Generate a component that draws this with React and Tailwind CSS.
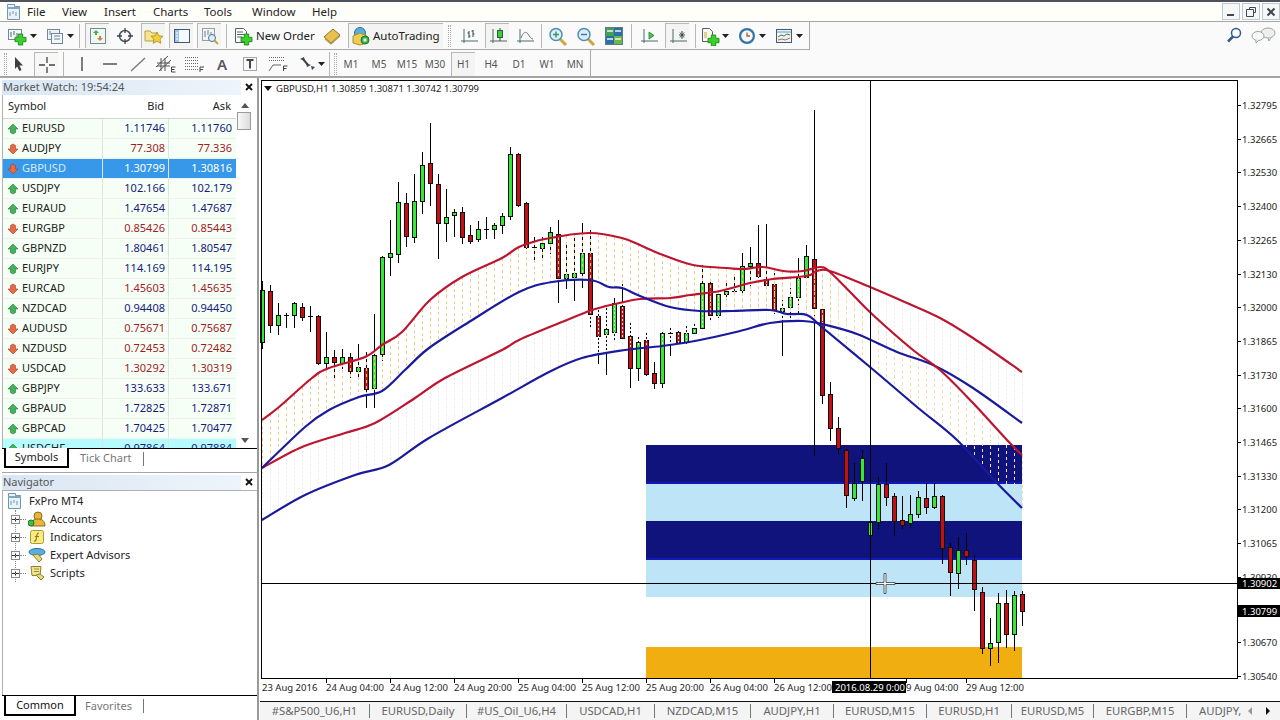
import React from "react";

const FONT = "font-['Noto_Sans','DejaVu_Sans',sans-serif]";

const markets = [
  ["EURUSD", "1.11746", "1.11760", 1],
  ["AUDJPY", "77.308", "77.336", 0],
  ["GBPUSD", "1.30799", "1.30816", 0],
  ["USDJPY", "102.166", "102.179", 1],
  ["EURAUD", "1.47654", "1.47687", 1],
  ["EURGBP", "0.85426", "0.85443", 0],
  ["GBPNZD", "1.80461", "1.80547", 1],
  ["EURJPY", "114.169", "114.195", 1],
  ["EURCAD", "1.45603", "1.45635", 0],
  ["NZDCAD", "0.94408", "0.94450", 1],
  ["AUDUSD", "0.75671", "0.75687", 0],
  ["NZDUSD", "0.72453", "0.72482", 0],
  ["USDCAD", "1.30292", "1.30319", 0],
  ["GBPJPY", "133.633", "133.671", 1],
  ["GBPAUD", "1.72825", "1.72871", 1],
  ["GBPCAD", "1.70425", "1.70477", 1],
  ["USDCHF", "0.97864", "0.97884", 1],
];

// x, high, bodyTop, bodyBottom, low, colour
const candles = [
  [262,281,290,342,348,"g"],[270,285,291,325,332,"r"],[278,303,315,325,334,"g"],[286,313,315,315,327,"d"],
  [294,302,303,315,327,"g"],[302,303,307,317,320,"r"],[310,306,316,316,331,"d"],[318,315,316,363,364,"r"],
  [326,332,357,363,368,"g"],[334,350,357,362,377,"r"],[342,349,357,363,368,"g"],[350,353,357,371,377,"r"],
  [358,344,367,371,377,"g"],[366,352,368,389,407,"r"],[374,314,355,388,407,"g"],[382,256,257,354,360,"g"],
  [390,220,253,257,275,"g"],[398,182,202,254,262,"g"],[406,193,203,236,246,"r"],[414,174,201,237,242,"g"],
  [422,152,165,201,213,"g"],[430,123,163,183,205,"r"],[438,174,184,223,258,"r"],[446,189,217,223,241,"g"],
  [454,209,212,215,236,"g"],[462,207,212,237,243,"r"],[470,225,235,241,243,"r"],[478,221,229,239,241,"g"],
  [486,217,229,229,238,"d"],[494,223,225,229,238,"g"],[502,213,216,225,233,"g"],[510,147,154,216,219,"g"],
  [518,153,154,205,206,"r"],[526,202,203,247,248,"r"],[534,237,247,247,260,"d"],[542,237,243,248,260,"g"],
  [550,227,232,243,253,"g"],[558,220,234,278,302,"r"],[566,243,274,278,288,"g"],[574,238,273,277,300,"g"],
  [582,223,253,273,287,"g"],[590,230,253,314,327,"r"],[598,310,316,336,363,"r"],[606,308,329,334,374,"g"],
  [614,298,303,332,340,"g"],[622,284,306,338,339,"r"],[630,322,336,368,387,"r"],[638,335,342,368,380,"g"],
  [646,333,340,374,375,"r"],[654,362,373,383,388,"r"],[662,332,333,383,387,"g"],[670,326,333,333,355,"d"],
  [678,330,332,342,343,"r"],[686,325,333,342,343,"g"],[694,322,328,333,335,"g"],[702,265,283,328,329,"g"],
  [710,280,283,315,320,"r"],[718,293,294,315,317,"g"],[726,282,291,294,300,"g"],[734,277,291,291,292,"d"],
  [742,253,266,290,295,"g"],[750,247,263,266,287,"g"],[758,225,263,276,277,"r"],[766,224,279,285,286,"r"],
  [774,273,284,310,313,"r"],[782,298,308,311,355,"g"],[790,287,297,307,320,"g"],[798,258,278,297,312,"g"],
  [806,245,256,277,278,"g"],[814,110,259,308,455,"r"],[822,308,309,395,403,"r"],[830,382,394,428,440,"r"],
  [838,417,428,448,453,"r"],[846,449,450,495,507,"r"],[854,463,483,498,500,"g"],[862,450,458,481,500,"g"],
  [870,505,522,535,536,"g"],[878,477,484,522,528,"g"],[886,463,484,497,505,"r"],[894,493,496,521,535,"r"],
  [902,496,520,525,528,"r"],[910,495,514,523,527,"g"],[918,491,497,514,517,"g"],[926,483,498,507,513,"r"],
  [934,483,496,507,508,"g"],[942,495,496,548,563,"r"],[950,543,547,572,595,"r"],[958,537,550,573,588,"g"],
  [966,533,550,556,564,"r"],[974,555,560,589,610,"r"],[982,587,592,648,653,"r"],[990,618,643,648,665,"g"],
  [998,593,603,642,662,"g"],[1006,590,603,634,647,"r"],[1014,591,595,634,650,"g"],[1022,591,594,611,625,"r"],
];

const R1 = [[262,420],[279,407],[312,378],[329,368],[365,357],[382,345],[402,332],[430,300],[462,277],[502,258],[519,247],[545,239],[589,233],[622,238],[642,246],[663,255],[693,265],[727,268],[743,269],[763,267],[783,271],[803,271],[820,267],[830,272],[853,295],[873,315],[913,350],[940,370],[973,403],[1007,440],[1022,455]];
const R2 = [[262,468],[302,447],[345,433],[375,423],[415,398],[445,378],[502,350],[519,340],[562,322],[592,310],[615,304],[640,299],[670,298],[690,295],[720,291],[750,283],[773,279],[807,276],[817,271],[830,271],[870,287],[907,303],[940,318],[973,338],[1022,372]];
const B1 = [[262,468],[305,427],[329,410],[359,397],[382,391],[405,370],[429,348],[469,322],[519,292],[552,282],[590,280],[609,287],[622,288],[640,296],[670,307],[700,311],[733,311],[770,310],[787,314],[807,315],[823,328],[870,367],[917,407],[957,440],[997,483],[1022,508]];
const B2 = [[262,520],[305,495],[355,475],[389,465],[429,438],[502,398],[549,372],[582,358],[625,350],[662,346],[700,340],[740,331],[770,323],[803,321],[822,324],[857,334],[897,352],[933,365],[973,388],[1022,423]];

const smooth = (l) => {
  let d = `M${l[0][0]} ${l[0][1]}`;
  for (let i = 0; i < l.length - 1; i++) {
    const p0 = l[Math.max(i - 1, 0)], p1 = l[i], p2 = l[i + 1], p3 = l[Math.min(i + 2, l.length - 1)];
    const c1 = [p1[0] + (p2[0] - p0[0]) / 6, p1[1] + (p2[1] - p0[1]) / 6];
    const c2 = [p2[0] - (p3[0] - p1[0]) / 6, p2[1] - (p3[1] - p1[1]) / 6];
    d += `C${c1[0].toFixed(1)} ${c1[1].toFixed(1)} ${c2[0].toFixed(1)} ${c2[1].toFixed(1)} ${p2[0]} ${p2[1]}`;
  }
  return d;
};
const at = (l, x) => {
  for (let i = 0; i < l.length - 1; i++) {
    if (x >= l[i][0] && x <= l[i + 1][0]) {
      return l[i][1] + ((l[i + 1][1] - l[i][1]) * (x - l[i][0])) / (l[i + 1][0] - l[i][0]);
    }
  }
  return l[l.length - 1][1];
};

const hatchXs = [];
for (let x = 262; x <= 1022; x += 8) hatchXs.push(x);

const prices = [
  ["1.32795",105],["1.32665",139],["1.32530",172],["1.32400",206],["1.32265",240],["1.32130",274],["1.32000",307],
  ["1.31865",341],["1.31730",375],["1.31600",408],["1.31465",442],["1.31330",476],["1.31200",509],["1.31065",543],
  ["1.30930",577],["1.30670",642],["1.30540",676],
];
const times = [
  ["23 Aug 2016",262,false],["24 Aug 04:00",326,true],["24 Aug 12:00",390,true],["24 Aug 20:00",454,true],
  ["25 Aug 04:00",518,true],["25 Aug 12:00",582,true],["25 Aug 20:00",646,true],["26 Aug 04:00",710,true],
  ["26 Aug 12:00",774,true],["9 Aug 04:00",906,true],["29 Aug 12:00",966,true],
];

function Chart() {
  return (
    <svg viewBox="260 78 1020 623" className="block h-[623px] w-[1020px]" style={{ fontFamily: "'Noto Sans','DejaVu Sans',sans-serif" }}>
      <rect x="260" y="78" width="1020" height="623" fill="#ffffff" />
      <g shapeRendering="crispEdges">
        <rect x="646" y="445" width="376" height="39" fill="#10137c" />
        <rect x="646" y="482" width="376" height="2" fill="#1418b8" />
        <rect x="646" y="484" width="376" height="37" fill="#bde4f7" />
        <rect x="646" y="521" width="376" height="39" fill="#10137c" />
        <rect x="646" y="558" width="376" height="2" fill="#1418b8" />
        <rect x="646" y="560" width="376" height="37" fill="#bde4f7" />
        <rect x="646" y="647" width="376" height="31" fill="#f0ae10" />
      </g>
      <g shapeRendering="crispEdges">
        {candles.map(([x, h, t, b, l, c]) => (
          <g key={x}>
            <line x1={x + 0.5} x2={x + 0.5} y1={h} y2={l + 1} stroke="#000" />
            {c === "d" ? (
              <line x1={x - 2} x2={x + 3} y1={t + 0.5} y2={t + 0.5} stroke="#000" />
            ) : (
              <rect x={x - 1.5} y={t + 0.5} width="4" height={b - t} fill={c === "g" ? "#35e835" : "#c40f14"} stroke="#111" />
            )}
          </g>
        ))}
      </g>
      <g shapeRendering="crispEdges">
        {hatchXs.map((x) => {
          const a = at(R2, x), b = at(B2, x), c = at(R1, x), d = at(B1, x);
          return (
            <g key={x}>
              <line x1={x + 0.5} x2={x + 0.5} y1={Math.min(a, b)} y2={Math.max(a, b)} stroke="#efe9ea" strokeDasharray="2 2" />
              <line x1={x + 0.5} x2={x + 0.5} y1={Math.min(c, d)} y2={Math.max(c, d)} stroke={x > 830 ? "#f5deb0" : "#f3cc88"} strokeDasharray="3 3" />
            </g>
          );
        })}
      </g>
      <path d={smooth(B2)} fill="none" stroke="#1a1a9e" strokeWidth="2.2" />
      <path d={smooth(R2)} fill="none" stroke="#bd1530" strokeWidth="2.2" />
      <path d={smooth(B1)} fill="none" stroke="#1a1a9e" strokeWidth="2.2" />
      <path d={smooth(R1)} fill="none" stroke="#bd1530" strokeWidth="2.2" />

      <g shapeRendering="crispEdges">
        <rect x="261.5" y="80.5" width="976" height="598" fill="none" stroke="#000" />
        <line x1="870.5" x2="870.5" y1="81" y2="678" stroke="#000" />
        <line x1="262" x2="1237" y1="583.5" y2="583.5" stroke="#000" />
        {prices.map(([p, y]) => <line key={p} x1="1237" x2="1241" y1={y + 0.5} y2={y + 0.5} stroke="#000" />)}
        {times.filter((t) => t[2]).map(([t, x]) => <line key={t} x1={x + 0.5} x2={x + 0.5} y1="678" y2="683" stroke="#000" />)}
      </g>

      <path d="M264 86h8l-4 5z" fill="#111" />
      <text x="276" y="92" fontSize="9.5" fill="#222">GBPUSD,H1  1.30859 1.30871 1.30742 1.30799</text>
      {prices.map(([p, y]) => (
        <text key={p} x="1242" y={y + 3.5} fontSize="9.5" fill="#222">{p}</text>
      ))}
      {times.map(([t, x]) => (
        <text key={t} x={x + 0} y="691" fontSize="9.5" fill="#222">{t}</text>
      ))}
      <g shapeRendering="crispEdges">
        <rect x="1238" y="578" width="42" height="11" fill="#000" />
        <rect x="1238" y="605" width="42" height="12" fill="#000" />
        <rect x="832" y="681" width="74" height="12" fill="#000" />
      </g>
      <text x="1242" y="587" fontSize="9.5" fill="#fff">1.30902</text>
      <text x="1242" y="614.5" fontSize="9.5" fill="#fff">1.30799</text>
      <text x="835" y="691" fontSize="9.5" fill="#fff">2016.08.29 0:00</text>
      <path d="M876 582.500h8v-9h2v9h9v2h-9v9h-2v-9h-8z" fill="#fff" stroke="#222" strokeWidth="0.7" />
    </svg>
  );
}

/* ---------- icons ---------- */
const Ic = ({ children, w = 20, h = 20 }) => (
  <svg width={w} height={h} viewBox={`0 0 ${w} ${h}`} className="block shrink-0">{children}</svg>
);
const Plus = ({ x = 0, y = 0, s = 1 }) => (
  <path transform={`translate(${x} ${y}) scale(${s})`} d="M3 0h4v3h3v4H7v3H3V7H0V3h3z" fill="#3ccf2e" stroke="#1d8a18" strokeWidth="0.8" />
);
const Caret = () => (
  <svg width="7" height="4" viewBox="0 0 7 4" className="block"><path d="M0 0h7L3.5 4z" fill="#222" /></svg>
);
const AxisIcon = ({ children }) => (
  <Ic w={22} h={20}>
    <path d="M6 3v14M3 15h17" stroke="#4d6a6a" strokeWidth="1" fill="none" />
    {children}
  </Ic>
);

const NewChart = () => (
  <Ic w={22}>
    <rect x="2.5" y="3.5" width="13" height="10" fill="#f4f8fb" stroke="#6f8aa0" />
    <path d="M5 6v5M8 5v4M11 7v4" stroke="#4d6a6a" />
    <Plus x={9} y={8} s={1.1} />
  </Ic>
);
const Profile = () => (
  <Ic w={22}>
    <rect x="3.5" y="3.5" width="12" height="10" fill="#eef3f7" stroke="#6f8aa0" />
    <rect x="7.5" y="7.5" width="11" height="10" fill="#f6f9fb" stroke="#6f8aa0" />
    <path d="M6 5v4M10 10h6M10 13h6" stroke="#6a8088" />
  </Ic>
);
const MarketIcon = () => (
  <Ic w={18} h={18}>
    <rect x="1.5" y="1.5" width="15" height="15" fill="#eef7f0" stroke="#6f8d9f" />
    <path d="M4 6l3-3 3 3H8v2H6V6z" fill="#49b04a" />
    <path d="M8 11h2V9h2v2h2l-3 3z" fill="#d9813a" />
  </Ic>
);
const CrossIcon = () => (
  <Ic>
    <circle cx="10" cy="10" r="5.5" fill="none" stroke="#4a5560" strokeWidth="1.5" />
    <path d="M10 2v5M10 13v5M2 10h5M13 10h5" stroke="#3a4550" strokeWidth="1.3" />
  </Ic>
);
const FolderStar = () => (
  <Ic w={22}>
    <path d="M2 5h5l2 2h5v8H2z" fill="#f6e48c" stroke="#b7a04a" />
    <path d="M14 6l1.8 3.8 4.2.5-3 2.9.8 4.1-3.8-2-3.8 2 .8-4.1-3-2.9 4.2-.5z" fill="#f4cf3d" stroke="#a88a20" strokeWidth="0.8" />
  </Ic>
);
const NavIcon = () => (
  <Ic w={18} h={18}>
    <rect x="1.5" y="2.5" width="15" height="13" fill="#f4f9fd" stroke="#3b5c7c" />
    <rect x="2" y="3" width="4" height="12" fill="#9ec6e4" />
    <path d="M3 6h2M3 9h2M3 12h2" stroke="#fff" />
  </Ic>
);
const TesterIcon = () => (
  <Ic>
    <rect x="2.5" y="2.5" width="12" height="12" fill="#f1f5f8" stroke="#8ea2b2" />
    <path d="M5 5v6M8 4v5M11 6v5" stroke="#6a7f88" />
    <circle cx="12" cy="12" r="3.5" fill="#dff0fa" stroke="#51708c" />
    <path d="M14.5 14.5l3.5 3.5" stroke="#c8a438" strokeWidth="2" />
  </Ic>
);
const NewOrderIcon = () => (
  <Ic w={22}>
    <path d="M3.5 2.5h8l3 3v11h-11z" fill="#fff" stroke="#52605e" />
    <path d="M5 6h6M5 8.500h7M5 11h5" stroke="#52605e" />
    <Plus x={9} y={8} s={1.1} />
  </Ic>
);
const BookIcon = () => (
  <Ic>
    <path d="M2 11l9-8 7 6-9 8z" fill="#e7c14c" stroke="#8d7428" />
    <path d="M3 13l6 5 9-8" fill="none" stroke="#b39a52" strokeWidth="1.2" />
  </Ic>
);
const AutoIcon = () => (
  <Ic w={22}>
    <circle cx="10" cy="7" r="5.5" fill="#58aede" stroke="#2f6f96" />
    <path d="M3 10l7-3 7 3v7l-7 2-7-2z" fill="#eecb52" stroke="#a88f30" />
    <circle cx="15" cy="14" r="4" fill="#2fb34a" stroke="#1c7a2f" />
    <rect x="13.500" y="12.500" width="3" height="3" fill="#e8f7ea" />
  </Ic>
);
const BarsIcon = () => (
  <AxisIcon>
    <path d="M11 5v7M9.500 7H11M11 10h1.500M15 4v7M13.500 5H15M15 8h1.500" stroke="#2f4a4a" fill="none" />
  </AxisIcon>
);
const CandleIcon = () => (
  <AxisIcon>
    <path d="M13 2v13" stroke="#2f4a4a" />
    <rect x="10.500" y="4.500" width="5" height="7" fill="#35d435" stroke="#2f5a3a" />
  </AxisIcon>
);
const LineIcon = () => (
  <AxisIcon>
    <path d="M7 12c2-6 5-7 7-4s3 5 5 5" fill="none" stroke="#6a7a78" strokeWidth="1" />
  </AxisIcon>
);
const Magnifier = ({ minus }) => (
  <Ic w={22}>
    <path d="M13 13l6 6" stroke="#c9a93c" strokeWidth="3" />
    <circle cx="9" cy="8.500" r="6" fill="#d9eefa" stroke="#4f8eb4" strokeWidth="1.500" />
    <path d={minus ? "M6 8.500h6" : "M6 8.500h6M9 5.500v6"} stroke={minus ? "#4779a8" : "#3c9a4c"} strokeWidth="1.500" />
  </Ic>
);
const TileIcon = () => (
  <Ic w={20}>
    <rect x="2" y="2" width="8" height="8" fill="#3fa257" />
    <rect x="10" y="2" width="8" height="8" fill="#2b6ea8" />
    <rect x="2" y="10" width="8" height="8" fill="#2b6ea8" />
    <rect x="10" y="10" width="8" height="8" fill="#6fb648" />
    <path d="M3 5h6M11 5h6M3 13h6M11 13h6" stroke="#eef6ee" strokeWidth="1.500" />
    <rect x="1.500" y="1.500" width="17" height="17" fill="none" stroke="#607a80" />
  </Ic>
);
const ScrollIcon = () => (
  <AxisIcon><path d="M11 6v7l5-3.500z" fill="#43c84a" stroke="#2f7a3a" strokeWidth="0.8" /></AxisIcon>
);
const AutoScrollIcon = () => (
  <AxisIcon><path d="M15 5v8M12 9h6M13 6.500l4 5M17 6.500l-4 5" stroke="#3a4a4a" /></AxisIcon>
);
const TemplateIcon = () => (
  <Ic w={22}>
    <path d="M3.500 2.500h7l3 3v10h-10z" fill="#f8f8f2" stroke="#52605e" />
    <rect x="5" y="6" width="3" height="6" fill="#e2d08a" />
    <Plus x={9} y={9} s={1.1} />
  </Ic>
);
const ClockIcon = () => (
  <Ic w={22}>
    <circle cx="11" cy="10" r="8" fill="#2f74a8" />
    <circle cx="11" cy="10" r="5.800" fill="#f6f8fa" />
    <path d="M11 6.500V10h3" stroke="#c05a30" strokeWidth="1.300" fill="none" />
  </Ic>
);
const ChartTplIcon = () => (
  <Ic w={22}>
    <rect x="3.500" y="3.500" width="15" height="13" fill="#e9f1f6" stroke="#3f5c70" />
    <path d="M4 6h14" stroke="#a8c8dc" strokeWidth="2" />
    <path d="M5 11l3-2 3 1 3-2 3 1" stroke="#4c7c4c" fill="none" />
    <path d="M5 14l4-1 3 1 5-2" stroke="#b36a50" fill="none" />
  </Ic>
);
const ArrowUpDiamond = () => (
  <svg width="12" height="12" viewBox="0 0 12 12" className="block shrink-0">
    <path d="M6 1l5 5H8.500v3.500L6 11 3.500 9.500V6H1z" fill="#43b05a" stroke="#237a38" strokeWidth="0.6" />
  </svg>
);
const ArrowDownDiamond = () => (
  <svg width="12" height="12" viewBox="0 0 12 12" className="block shrink-0">
    <path d="M6 11L1 6h2.500V2.500L6 1l2.500 1.500V6H11z" fill="#e86a44" stroke="#a83a20" strokeWidth="0.6" />
  </svg>
);
const AppIcon = () => (
  <svg width="18" height="18" viewBox="0 0 18 18" className="block shrink-0">
    <path d="M3.500 1.500h7v2h5v13h-12z" fill="#e8f2f8" stroke="#6f97b2" />
    <path d="M3 5h13" stroke="#7da7c4" strokeWidth="2" />
    <path d="M6 9v4M9 8v3M12 9v4" stroke="#7a93a6" />
  </svg>
);

const Sep = () => <div className="h-[24px] w-px bg-[#b8b8b8]" />;
const Grip = () => <div className="h-[22px] w-[3px] border-x border-dotted border-[#aaaaaa]" />;

const TB = ({ children, pressed }) => (
  <div className="flex h-full w-[28px] shrink-0 items-center justify-center">
    {pressed ? <div className="flex h-[25px] w-[24px] items-center justify-center border-t border-l border-[#b8b8b8] bg-[#f4f4f2]">{children}</div> : children}
  </div>
);

const Menu = () => (
  <div className="flex h-[22px] items-center border-b border-[#a5a5a5] bg-[#fffffa] text-[11.5px] text-[#222]">
    <div className="absolute top-0 left-0 h-[2px] w-[1280px] bg-[#50525e]" />
    <div className="flex w-[24px] justify-center pt-[3px] pl-[2px]"><AppIcon /></div>
    <span className="ml-[3px] w-[35px] pt-[2px]">File</span>
    <span className="w-[42px] pt-[2px]">View</span>
    <span className="w-[49px] pt-[2px]">Insert</span>
    <span className="w-[51px] pt-[2px]">Charts</span>
    <span className="w-[48px] pt-[2px]">Tools</span>
    <span className="w-[60px] pt-[2px]">Window</span>
    <span className="pt-[2px]">Help</span>
    <div className="ml-auto flex items-center gap-[2px] pt-[2px]">
      {["minimize", "restore", "close"].map((k) => (
        <div key={k} className="flex h-[17px] w-[18px] items-center justify-center border border-[#b9cbd2] bg-[#f6f8f8]">
          <svg width="12" height="12" viewBox="0 0 12 12">
            {k === "minimize" && <path d="M2 9h7" stroke="#445" strokeWidth="2" />}
            {k === "restore" && <path d="M4.500 3.500V1.500h6v5h-2M1.500 3.500h7v7h-7z" fill="none" stroke="#445" />}
            {k === "close" && <path d="M2.500 2.500l7 7M9.500 2.500l-7 7" stroke="#445" strokeWidth="2" />}
          </svg>
        </div>
      ))}
    </div>
  </div>
);

const Toolbar1 = () => (
  <div className="flex h-[28px] items-center bg-[#fafafa] text-[11.5px] text-[#222]">
    <div className="flex h-full w-[810px] items-center border-r border-b border-[#a8a8a8] pl-[6px]">
      <div className="flex w-[22px] justify-center"><NewChart /></div>
      <div className="flex w-[10px] justify-center"><Caret /></div>
      <div className="ml-[6px] flex w-[22px] justify-center"><Profile /></div>
      <div className="flex w-[8px] justify-center"><Caret /></div>
      <div className="flex w-[9px] justify-center pl-[1px]"><Sep /></div>
      <TB pressed><MarketIcon /></TB>
      <TB><CrossIcon /></TB>
      <TB pressed><FolderStar /></TB>
      <TB pressed><NavIcon /></TB>
      <TB pressed><TesterIcon /></TB>
      <div className="flex w-[6px] justify-center"><Sep /></div>
      <div className="flex w-[92px] items-center gap-[2px] pl-[3px]"><NewOrderIcon /><span className="whitespace-nowrap">New Order</span></div>
      <div className="flex w-[22px] justify-center"><BookIcon /></div>
      <div className="ml-[5px] flex h-[25px] w-[95px] items-center gap-[1px] border-t border-l border-[#b8b8b8] bg-[#f4f4f2] pl-[1px]"><AutoIcon /><span className="whitespace-nowrap">AutoTrading</span></div>
      <div className="flex w-[12px] justify-center"><Grip /></div>
      <TB><BarsIcon /></TB>
      <TB pressed><CandleIcon /></TB>
      <TB><LineIcon /></TB>
      <div className="flex w-[5px] justify-start pl-[2px]"><Sep /></div>
      <TB><Magnifier /></TB>
      <TB><Magnifier minus /></TB>
      <TB><TileIcon /></TB>
      <div className="flex w-[7px] justify-center"><Sep /></div>
      <TB><ScrollIcon /></TB>
      <TB pressed><AutoScrollIcon /></TB>
      <div className="flex w-[8px] justify-center"><Sep /></div>
      <div className="flex w-[22px] justify-center"><TemplateIcon /></div>
      <div className="flex w-[8px] justify-center"><Caret /></div>
      <div className="ml-[7px] flex w-[22px] justify-center"><ClockIcon /></div>
      <div className="flex w-[8px] justify-center"><Caret /></div>
      <div className="ml-[7px] flex w-[22px] justify-center"><ChartTplIcon /></div>
      <div className="flex w-[8px] justify-center"><Caret /></div>
    </div>
    <div className="ml-auto flex items-center gap-[6px] pr-[4px]">
      <svg width="20" height="20" viewBox="0 0 20 20" className="block">
        <circle cx="12" cy="7" r="4.500" fill="#f4f9ff" stroke="#33588c" strokeWidth="1.500" />
        <path d="M9 10.500l-5 5" stroke="#33588c" strokeWidth="2.500" />
      </svg>
      <svg width="26" height="20" viewBox="0 0 26 20" className="block">
        <ellipse cx="18" cy="7" rx="7" ry="5" fill="#eef0f0" stroke="#9aa3a3" />
        <path d="M18 12l1 3 2-3.500" fill="#eef0f0" stroke="#9aa3a3" />
        <ellipse cx="8" cy="10" rx="6" ry="4.500" fill="#f8f8f8" stroke="#9aa3a3" />
        <path d="M6 14l0 3 3-3" fill="#f8f8f8" stroke="#9aa3a3" />
      </svg>
    </div>
  </div>
);

const TF = ({ t, pressed }) => (
  <div className="flex h-full w-[28px] shrink-0 items-center justify-center text-[10px] text-[#555]">
    {pressed ? <div className="flex h-[24px] w-[24px] items-center justify-center border-t border-l border-[#b8b8b8] bg-[#f4f4f2]">{t}</div> : t}
  </div>
);
const Draw = ({ children, pressed }) => <TB pressed={pressed}>{children}</TB>;

const Toolbar2 = () => (
  <div className="flex h-[28px] items-center border-b-2 border-[#a5a5a5] bg-[#fafafa]">
    <div className="flex h-full w-[591px] items-center border-r border-[#a8a8a8] pt-[2px] pl-[4px]">
      <div className="flex w-[4px] justify-start"><Grip /></div>
      <div className="flex w-[22px] justify-center">
        <Ic><path d="M6 3l8 8.500h-3.500l2 4.500-2.200 1-2-4.500L6 15z" fill="#3b3f44" /></Ic>
      </div>
      <div className="ml-[4px] flex h-[24px] w-[24px] items-center justify-center border-t border-l border-[#b8b8b8] bg-[#f7f7f5]">
        <Ic><path d="M10 2v6M10 12v6M2 10h6M12 10h6" stroke="#3d444a" strokeWidth="1.300" /></Ic>
      </div>
      <div className="flex w-[10px] justify-center"><Sep /></div>
      <Draw><Ic><path d="M10 3v14" stroke="#555" strokeWidth="1.500" /></Ic></Draw>
      <Draw><Ic><path d="M3 10h14" stroke="#555" strokeWidth="1.500" /></Ic></Draw>
      <Draw><Ic><path d="M3 17L17 4" stroke="#777" strokeWidth="1.300" /></Ic></Draw>
      <Draw>
        <Ic w={22}>
          <path d="M1 13L13 2M4 17L16 6M2 9h13M2 12h13M6 4v13M10 4v13" stroke="#555" fill="none" />
          <path d="M16.500 13h4M16.500 15.500h3M16.500 18h4M16.500 13v5" stroke="#444" />
        </Ic>
      </Draw>
      <Draw>
        <Ic w={22}>
          <path d="M2 3.500h14M2 6.500h14M2 9.500h14M2 12.500h14M2 15.500h14" stroke="#666" strokeDasharray="1 1" />
          <path d="M17 13h4M17 15.500h3M17 13v5" stroke="#444" />
        </Ic>
      </Draw>
      <Draw><span className="text-[15px] font-semibold text-[#556]">A</span></Draw>
      <Draw>
        <Ic>
          <rect x="3.500" y="3.500" width="13" height="13" fill="none" stroke="#555" strokeDasharray="1 1" />
          <path d="M6.500 6h7M10 6v8.500" stroke="#445" strokeWidth="2" />
        </Ic>
      </Draw>
      <Draw>
        <Ic w={22}>
          <path d="M2 3.500h16M2 6.500h16" stroke="#666" strokeDasharray="1 1" />
          <path d="M2 17l4-6h8" stroke="#666" fill="none" />
          <path d="M16.500 12h4M16.500 14.500h3M16.500 12v5" stroke="#444" />
        </Ic>
      </Draw>
      <div className="ml-[4px] flex w-[22px] justify-center">
        <Ic>
          <path d="M3 5l4-2 1 4zM9 9l5 2-4 2zM14 12l4 1-3 3z" fill="#3a4850" />
          <path d="M6 5l5 6" stroke="#3a4850" strokeWidth="2" />
        </Ic>
      </div>
      <div className="flex w-[7px] justify-center"><Caret /></div>
      <div className="flex w-[8px] justify-center"><Sep /></div>
      <div className="flex w-[4px] justify-center"><Grip /></div>
      <TF t="M1" /><TF t="M5" /><TF t="M15" /><TF t="M30" /><TF t="H1" pressed /><TF t="H4" /><TF t="D1" /><TF t="W1" /><TF t="MN" />
    </div>
  </div>
);

const TitleBar = ({ title }) => (
  <div className="flex h-[16px] items-center">
    <div className="flex h-[15px] w-[239px] items-center bg-gradient-to-r from-[#d9e6f3] to-[#eef4fb] pl-[1px] text-[11px] text-[#555]">{title}</div>
    <svg width="10" height="10" viewBox="0 0 10 10" className="ml-[3px] block">
      <path d="M2 2l6 6M8 2l-6 6" stroke="#111" strokeWidth="1.800" />
    </svg>
  </div>
);

const MarketWatch = () => (
  <div className="flex h-[395px] flex-col border-b border-[#a5a5a5] pt-[1px]">
    <TitleBar title="Market Watch: 19:54:24" />
    <div className="relative h-[353px] overflow-hidden border-l border-[#b0b0b0] bg-white">
      <div className="flex h-[24px] w-[233px] items-center border-b border-[#d5d5d5] pb-[1px] text-[11px] text-[#222]">
        <span className="ml-[5px] w-[114px]">Symbol</span>
        <span className="w-[42px] text-right">Bid</span>
        <span className="w-[67px] text-right">Ask</span>
      </div>
      {markets.map(([s, b, a, up]) => {
        const sel = s === "GBPUSD";
        const last = s === "USDCHF";
        const col = sel ? "text-white" : up ? "text-[#18187e]" : "text-[#a01c28]";
        const rowBg = sel ? "bg-[#3798ea]" : last ? "bg-[#b6fbff]" : "bg-[#f5fff5]";
        return (
          <div key={s} className={`flex h-[20px] w-[233px] items-center border-b border-[#eef2ee] text-[11px] ${rowBg}`}>
            <div className={`flex h-full w-[99px] items-center gap-[3px] pl-[4px] ${sel ? "text-[#d8eaff]" : "text-[#222]"}`}>
              {up ? <ArrowUpDiamond /> : <ArrowDownDiamond />}
              <span>{s}</span>
            </div>
            <div className={`flex h-full w-[66px] items-center justify-end border-l border-[#dde5dd] pr-[3px] ${col}`}>{b}</div>
            <div className={`flex h-full w-[68px] items-center justify-end border-l border-[#dde5dd] pr-[4px] ${col}`}>{a}</div>
          </div>
        );
      })}
      <svg width="8" height="5" viewBox="0 0 8 5" className="absolute top-[8px] left-[238px]"><path d="M4 0l4 5H0z" fill="#555" /></svg>
      <div className="absolute top-[17px] left-[234px] h-[18px] w-[14px] border border-[#9a9a9a] bg-gradient-to-r from-[#f8f8f8] to-[#dcdcdc]" />
      <svg width="8" height="5" viewBox="0 0 8 5" className="absolute top-[343px] left-[238px]"><path d="M4 5l4-5H0z" fill="#555" /></svg>
    </div>
    <div className="flex h-[22px] items-start border-t border-black text-[11px]">
      <div className="-mt-px ml-[2px] flex h-[20px] w-[65px] items-center justify-center border-x-2 border-b-2 border-black bg-white text-[#222]">Symbols</div>
      <span className="ml-[11px] w-[63px] pt-[1px] text-[#777]">Tick Chart</span>
      <div className="mt-[3px] h-[14px] w-px bg-[#777]" />
    </div>
  </div>
);

const TreeRow = ({ icon, label }) => (
  <div className="flex h-[18px] items-center text-[11px] text-[#222]">
    <div className="ml-[8px] flex h-[9px] w-[9px] shrink-0 items-center justify-center border border-[#8a8a8a] bg-white">
      <svg width="7" height="7" viewBox="0 0 7 7" className="block"><path d="M0 3.500h7M3.500 1v5" stroke="#333" /></svg>
    </div>
    <div className="w-[6px] border-t border-dotted border-[#888]" />
    <div className="flex w-[22px] items-center justify-center">{icon}</div>
    <span className="pl-[2px]">{label}</span>
  </div>
);

const Navigator = () => (
  <div className="flex flex-1 flex-col pt-[1px]">
    <TitleBar title="Navigator" />
    <div className="relative flex-1 overflow-hidden border-t border-l border-[#b0b0b0] bg-white pt-[1px]">
      <div className="flex h-[18px] items-center gap-[6px] pl-[2px] text-[11px] text-[#222]">
        <AppIcon />
        <span>FxPro MT4</span>
      </div>
      <TreeRow label="Accounts" icon={
        <svg width="18" height="16" viewBox="0 0 18 16" className="block">
          <circle cx="10" cy="5" r="4" fill="#e8b63a" stroke="#8d6a18" />
          <path d="M3 15c0-5 3-7 7-7s7 2 7 7z" fill="#e8b63a" stroke="#8d6a18" />
          <circle cx="3" cy="12" r="3" fill="#3fc044" stroke="#1f7a26" />
        </svg>} />
      <TreeRow label="Indicators" icon={
        <svg width="16" height="16" viewBox="0 0 16 16" className="block">
          <rect x="1.500" y="1.500" width="13" height="13" rx="2" fill="#f8ec80" stroke="#a89a3a" />
          <path d="M10 4c-2 0-2 1-2.300 3L7 11c-.3 1-1 1.300-2 1M6 7.500h4" stroke="#9a7a1a" strokeWidth="1.200" fill="none" />
        </svg>} />
      <TreeRow label="Expert Advisors" icon={
        <svg width="18" height="16" viewBox="0 0 18 16" className="block">
          <ellipse cx="9" cy="5" rx="8" ry="3.500" fill="#58aede" stroke="#2f6f96" />
          <path d="M5 8l5-1 4 5-3 3z" fill="#e8d878" stroke="#8a8030" />
        </svg>} />
      <TreeRow label="Scripts" icon={
        <svg width="18" height="16" viewBox="0 0 18 16" className="block">
          <path d="M3 1.500h10l-1 9H4z" fill="#f0e48a" stroke="#8a8030" />
          <path d="M8 10l4-1 4 3-3 3z" fill="#e8d878" stroke="#8a8030" />
          <path d="M6 4h5M6 6.500h5" stroke="#9a9040" />
        </svg>} />
      <div className="absolute top-[19px] left-[12px] h-[72px] border-l border-dotted border-[#888]" />
    </div>
    <div className="flex h-[25px] items-start border-t border-black bg-white text-[11px]">
      <div className="ml-[2px] flex h-[20px] w-[72px] items-center justify-center border-x-2 border-b-2 border-black text-[#111]">Common</div>
      <span className="ml-[9px] w-[58px] pt-[2px] text-[#777]">Favorites</span>
      <div className="mt-[3px] h-[14px] w-px bg-[#777]" />
    </div>
  </div>
);

const tabs = [
  ["#S&P500_U6,H1", 110], ["EURUSD,Daily", 97], ["#US_Oil_U6,H4", 100], ["USDCAD,H1", 88], ["NZDCAD,M15", 96],
  ["AUDJPY,H1", 83], ["EURUSD,M15", 93], ["EURUSD,H1", 85], ["EURUSD,M5", 82], ["EURGBP,M15", 93],
];

const TabStrip = () => (
  <div className="flex h-[19px] items-center overflow-hidden border-t border-[#111] bg-[#f4f4f4] text-[11.3px] text-[#666]">
    {tabs.map(([t, w]) => (
      <div key={t} style={{ width: w }} className="flex h-[14px] shrink-0 items-center justify-center border-r border-[#777] whitespace-nowrap">{t}</div>
    ))}
    <div className="ml-[12px] w-[44px] shrink-0 overflow-hidden whitespace-nowrap">AUDJPY,</div>
    <div className="ml-auto flex items-center gap-[14px] pr-[10px]">
      <svg width="4" height="8" viewBox="0 0 4 8" className="block"><path d="M4 0v8L0 4z" fill="#999" /></svg>
      <svg width="4" height="8" viewBox="0 0 4 8" className="block"><path d="M0 0v8l4-4z" fill="#111" /></svg>
    </div>
  </div>
);

export default function App() {
  return (
    <div className={`relative flex h-[720px] w-[1280px] flex-col overflow-hidden bg-white ${FONT}`}>
      <Menu />
      <Toolbar1 />
      <Toolbar2 />
      <div className="flex min-h-0 flex-1">
        <div className="flex h-full w-[258px] shrink-0 flex-col border-r border-[#9a9a9a] pl-[2px]">
          <MarketWatch />
          <Navigator />
        </div>
        <div className="flex w-[1022px] flex-col border-l border-[#9a9a9a] pl-[1px]">
          <div className="h-[623px] overflow-hidden"><Chart /></div>
          <TabStrip />
        </div>
      </div>
    </div>
  );
}
